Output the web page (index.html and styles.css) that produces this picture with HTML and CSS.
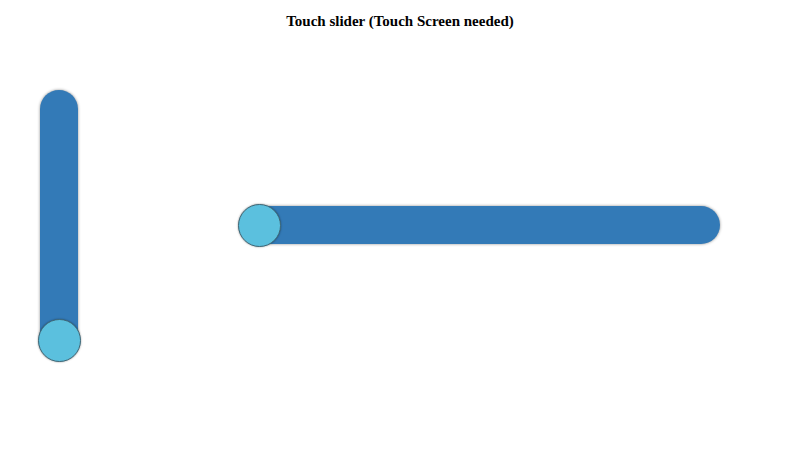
FILE: index.html
```html
<!DOCTYPE html>
<html lang="en">
<head>
<meta charset="utf-8">
<title>Touch slider</title>
<link rel="stylesheet" href="styles.css">
</head>
<body>
<h1 class="title">Touch slider (Touch Screen needed)</h1>
<div class="stage">
  <div class="slider slider-vertical">
    <div class="knob knob-vertical"></div>
  </div>
  <div class="slider slider-horizontal">
    <div class="knob knob-horizontal"></div>
  </div>
</div>
</body>
</html>
```
FILE: styles.css
```css
html, body {
  margin: 0;
  padding: 0;
  background: #ffffff;
}

body {
  width: 800px;
  height: 450px;
  overflow: hidden;
  font-family: "Liberation Serif", "Times New Roman", serif;
}

.title {
  margin: 0;
  padding-top: 11px;
  font-size: 15px;
  line-height: 20px;
  font-weight: bold;
  text-align: center;
  color: #000;
}

.stage {
  display: flex;
  align-items: flex-start;
  padding: 59px 0 0 40px;
}

.slider {
  position: relative;
  background: #337ab7;
  border-radius: 19px;
  box-shadow: 0 0 3px rgba(0, 0, 0, 0.45);
}

.slider-vertical {
  width: 38px;
  height: 270px;
}

.slider-horizontal {
  width: 480px;
  height: 38px;
  margin: 116px 0 0 162px;
}

.knob {
  position: absolute;
  width: 41px;
  height: 41px;
  border-radius: 50%;
  background: #5bc0de;
  border: 1px solid #3f6878;
  box-shadow: 0 0 2px rgba(0, 0, 0, 0.4);
}

.knob-vertical {
  left: -2px;
  bottom: -2px;
}

.knob-horizontal {
  left: -2px;
  top: -2px;
}
```
